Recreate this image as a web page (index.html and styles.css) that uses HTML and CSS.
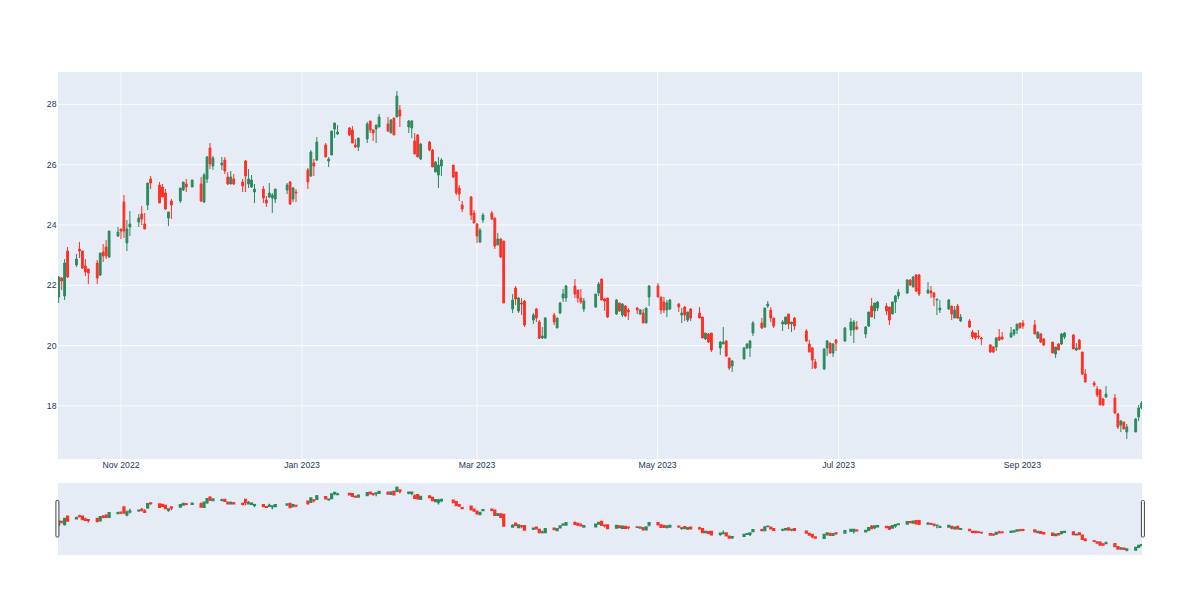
FILE: index.html
```html
<!DOCTYPE html>
<html lang="en">
<head>
<meta charset="utf-8">
<title>Candlestick chart</title>
<link rel="stylesheet" href="styles.css">
</head>
<body>
<svg class="chart" width="1200" height="613" viewBox="0 0 1200 613" xmlns="http://www.w3.org/2000/svg">
  <defs>
    <clipPath id="main-clip"><rect x="58" y="72" width="1084" height="387"/></clipPath>
    <clipPath id="slider-clip"><rect x="58" y="483" width="1084" height="72"/></clipPath>
  </defs>
  <rect class="plot-bg" x="58" y="72" width="1084" height="387"/>
  <path class="grid" d="M58 104.4H1142M58 164.7H1142M58 225H1142M58 285.3H1142M58 345.6H1142M58 405.9H1142M121 72V459M302 72V459M477 72V459M657.6 72V459M838.6 72V459M1022.4 72V459"/>
  <g id="main-candles" clip-path="url(#main-clip)"></g>
  <g class="tick tick-y">
    <text x="56.5" y="107.4">28</text>
    <text x="56.5" y="167.7">26</text>
    <text x="56.5" y="228">24</text>
    <text x="56.5" y="288.3">22</text>
    <text x="56.5" y="348.6">20</text>
    <text x="56.5" y="408.9">18</text>
  </g>
  <g class="tick tick-x">
    <text x="121" y="468">Nov 2022</text>
    <text x="302" y="468">Jan 2023</text>
    <text x="477" y="468">Mar 2023</text>
    <text x="657.6" y="468">May 2023</text>
    <text x="838.6" y="468">Jul 2023</text>
    <text x="1022.4" y="468">Sep 2023</text>
  </g>
  <rect class="plot-bg" x="58" y="483" width="1084" height="72"/>
  <g id="slider-candles" class="slider" clip-path="url(#slider-clip)"></g>
  <rect class="handle" x="55.9" y="500.5" width="3" height="36.5" rx="1"/>
  <rect class="handle" x="1141.4" y="500.5" width="3" height="36.5" rx="1"/>
</svg>
<script src="chart.js"></script>
</body>
</html>
```
FILE: styles.css
```css
html, body {
  margin: 0;
  padding: 0;
  background: #fff;
}
.chart {
  display: block;
}
.plot-bg {
  fill: #e5ecf6;
}
.grid {
  fill: none;
  stroke: #fff;
  stroke-width: 0.85;
}
.tick text {
  font-family: "Liberation Sans", Arial, sans-serif;
  font-size: 8.7px;
  fill: #233757;
}
.tick-y text {
  text-anchor: end;
}
.tick-x text {
  text-anchor: middle;
}
.inc {
  stroke: #2a8a5c;
  fill: #2a8a5c;
}
.dec {
  stroke: #ff2f24;
  fill: #ff2f24;
}
.inc, .dec {
  stroke-width: 1;
}
.slider .inc, .slider .dec {
  stroke-width: 1.4;
}
.handle {
  fill: #fff;
  stroke: #444;
  stroke-width: 1;
}
```
FILE: chart.js
```js
// [calendar day since 10 Oct 2022, high, body top, body bottom, low, 1 = up / 0 = down] (pixel y of the main plot)
var D = [
[1,276,277,297,303,1],[2,277,278,281,290,0],[3,259,263,296,300,1],[4,247,251,277,278,0],
[7,254,259,265,267,1],[8,242,249,251,258,0],[9,251,251,268,269,0],[10,259,266,272,276,0],[11,269,269,273,284,0],
[14,260,263,278,284,0],[15,253,253,275,276,1],[16,244,252,256,262,0],[17,240,247,256,259,0],[18,231,231,257,258,1],
[21,227,232,236,237,1],[22,229,229,231,239,0],[23,195,202,231,238,0],[24,220,229,243,251,1],[25,211,224,227,236,1],
[28,214,218,222,227,1],[29,206,214,219,225,0],[30,213,224,229,229,0],[31,183,183,205,210,1],[32,176,179,183,189,0],
[35,182,185,203,203,0],[36,184,187,197,197,0],[37,189,193,209,210,0],[38,212,212,218,226,1],[39,199,201,205,219,0],
[42,188,188,201,203,1],[43,182,182,190,191,1],[44,179,184,187,192,0],[46,180,180,187,187,1],
[49,177,184,201,202,0],[50,173,175,202,203,1],[51,156,157,179,183,1],[52,143,148,164,169,0],[53,156,158,166,170,1],
[56,157,163,165,170,1],[57,157,160,171,174,0],[58,172,177,184,185,0],[59,171,177,184,184,1],[60,174,179,184,185,0],
[63,179,182,186,192,0],[64,160,161,176,192,0],[65,169,179,184,188,1],[66,175,180,187,188,1],[67,184,189,192,203,1],
[70,186,189,198,203,0],[71,196,200,203,207,0],[72,183,193,197,198,1],[73,193,195,198,213,1],[74,189,189,199,203,1],
[78,183,185,190,194,1],[79,181,182,204,205,0],[80,187,188,199,202,1],[81,189,192,193,202,0],
[85,168,170,182,189,0],[86,150,152,176,177,1],[87,159,163,166,176,0],[88,137,142,160,161,1],
[91,143,145,157,157,0],[92,157,159,161,167,1],[93,131,131,155,155,1],[94,123,123,129,138,1],[95,125,132,134,135,1],
[99,127,128,135,136,0],[100,126,130,143,143,0],[101,139,145,147,148,0],[102,138,138,147,151,1],
[105,122,124,139,143,1],[106,121,121,130,133,0],[107,129,130,133,141,0],[108,125,125,129,143,1],[109,114,117,127,127,1],
[112,117,124,131,132,0],[113,119,120,133,133,1],[114,118,118,135,135,0],[115,91,96,117,117,1],[116,105,110,116,127,0],
[119,120,121,127,133,1],[120,120,121,128,138,1],[121,133,141,154,154,0],[122,134,135,157,157,0],[123,143,144,159,160,1],
[126,141,142,150,151,0],[127,149,150,167,167,0],[128,161,162,172,172,1],[129,157,165,175,188,1],[130,158,160,166,176,1],
[134,165,165,177,178,0],[135,172,172,193,195,0],[136,185,188,194,201,0],[137,201,205,209,212,0],
[140,196,197,215,220,0],[141,210,213,223,223,0],[142,223,224,236,243,0],[143,228,230,242,243,1],[144,213,215,220,223,1],
[147,211,213,219,220,0],[148,218,218,246,249,0],[149,233,239,245,245,1],[150,238,239,257,258,0],[151,241,241,303,303,0],
[154,294,300,309,313,1],[155,286,288,299,305,0],[156,297,298,311,313,1],[157,298,303,304,315,0],[158,300,301,325,327,0],
[161,313,315,320,324,1],[162,308,309,318,322,0],[163,320,322,338,339,0],[164,327,336,338,339,1],[165,317,318,338,339,1],
[168,313,315,322,325,0],[169,318,318,328,328,1],[170,302,303,313,314,1],[171,289,294,298,302,1],[172,285,286,298,302,1],
[175,279,286,294,298,0],[176,290,290,298,303,0],[177,289,298,302,304,0],[178,298,301,309,312,1],
[182,294,294,307,308,1],[183,282,284,293,296,1],[184,279,279,300,300,0],[185,298,299,301,311,0],[186,298,298,317,318,0],
[189,299,300,314,315,1],[190,303,303,311,312,0],[191,303,304,315,317,1],[192,305,306,316,317,0],[193,308,310,312,320,0],
[196,307,308,310,314,0],[197,309,310,314,315,1],[198,309,313,323,323,0],[199,308,308,323,323,1],[200,285,286,297,306,1],
[203,283,286,297,297,0],[204,297,297,310,314,0],[205,297,302,310,313,0],[206,300,303,310,317,1],[207,299,300,309,310,1],
[210,303,304,307,312,0],[211,308,313,315,323,1],[212,306,307,315,321,0],[213,312,312,320,322,1],[214,308,309,318,321,0],
[217,307,313,318,318,0],[218,317,317,338,338,0],[219,333,333,339,340,1],[220,333,334,342,343,0],[221,333,333,350,352,0],
[224,341,342,348,355,1],[225,327,342,344,344,1],[226,340,341,356,357,0],[227,358,358,368,370,0],[228,360,361,366,372,1],
[232,347,348,359,359,1],[233,343,344,348,349,1],[234,340,341,348,357,1],[235,321,323,333,336,1],
[238,318,323,328,329,0],[239,308,308,327,328,1],[240,301,304,306,308,1],[241,307,310,318,322,0],[242,318,318,326,328,0],
[245,320,322,324,331,1],[246,317,317,324,325,1],[247,314,314,324,329,0],[248,322,322,324,332,1],[249,317,318,326,330,0],
[253,329,331,341,342,0],[254,340,344,352,352,0],[255,347,348,360,369,0],[256,359,362,368,369,0],
[259,348,349,369,370,1],[260,340,341,348,356,1],[261,343,343,353,354,0],[262,343,344,353,357,1],[263,339,340,343,351,0],
[266,327,328,341,342,1],[268,318,322,330,336,1],[269,320,322,330,343,1],[270,321,327,329,330,0],
[273,326,327,334,338,1],[274,312,312,326,327,1],[275,298,306,317,317,0],[276,303,303,311,319,1],[277,301,302,308,311,1],
[280,303,306,311,315,0],[281,307,307,320,325,0],[282,302,302,314,314,1],[283,295,296,302,313,1],[284,289,292,296,299,1],
[287,279,280,293,294,1],[288,279,280,285,286,0],[289,276,277,287,287,1],[290,274,275,291,292,0],[291,274,275,294,296,0],
[294,282,290,293,294,1],[295,286,291,293,298,0],[296,292,293,297,306,0],[297,299,299,300,315,1],[298,300,308,310,313,1],
[301,299,300,309,310,1],[302,306,306,314,320,0],[303,306,310,318,318,1],[304,304,306,318,319,0],[305,314,317,321,322,1],
[308,319,321,327,328,0],[309,330,332,337,339,0],[310,333,333,338,340,0],[311,330,336,337,339,0],[312,337,338,339,345,0],
[315,344,345,352,353,0],[316,346,347,352,353,0],[317,337,338,347,351,1],[318,329,337,340,341,0],[319,332,337,339,340,0],
[322,327,333,337,338,1],[323,329,330,334,336,1],[324,324,324,330,334,1],[325,323,323,328,328,0],[326,320,323,326,329,0],
[330,320,325,334,334,0],[331,332,332,338,339,1],[332,333,334,342,343,0],[333,338,339,345,346,0],
[336,342,342,353,353,0],[337,347,347,354,358,1],[338,343,344,350,350,0],[339,333,334,344,345,1],[340,332,333,337,339,1],
[343,334,335,349,349,0],[344,343,348,350,351,1],[345,339,340,349,350,0],[346,352,352,374,375,0],[347,369,374,382,382,0],
[350,381,383,385,387,0],[351,386,389,395,397,0],[352,389,390,405,405,0],[353,398,399,405,406,0],[354,386,394,397,398,1],
[357,394,398,413,414,0],[358,413,414,427,429,0],[359,420,421,425,432,1],[360,422,422,429,429,0],[361,424,427,432,439,1],
[364,418,419,432,432,1],[365,405,408,417,421,1],[366,401,403,408,409,1]
];

var SVG = "http://www.w3.org/2000/svg";
var HALF = 0.9;

function xOf(day) { return 55.7 + 2.967 * day; }
function sliderY(y) { return 483 + (y - 72) * 72 / 387; }
function same(y) { return y; }

function draw(target, mapY) {
  D.forEach(function (c) {
    var x = xOf(c[0]), hi = mapY(c[1]), top = mapY(c[2]), bot = mapY(c[3]), lo = mapY(c[4]);
    var d = "M" + (x - HALF).toFixed(2) + " " + bot.toFixed(2) +
      "V" + top.toFixed(2) + "H" + (x + HALF).toFixed(2) + "V" + bot.toFixed(2) + "Z" +
      "M" + x.toFixed(2) + " " + top.toFixed(2) + "V" + hi.toFixed(2) +
      "M" + x.toFixed(2) + " " + bot.toFixed(2) + "V" + lo.toFixed(2);
    var p = document.createElementNS(SVG, "path");
    p.setAttribute("d", d);
    p.setAttribute("class", c[5] ? "inc" : "dec");
    target.appendChild(p);
  });
}

draw(document.getElementById("main-candles"), same);
draw(document.getElementById("slider-candles"), sliderY);
```
